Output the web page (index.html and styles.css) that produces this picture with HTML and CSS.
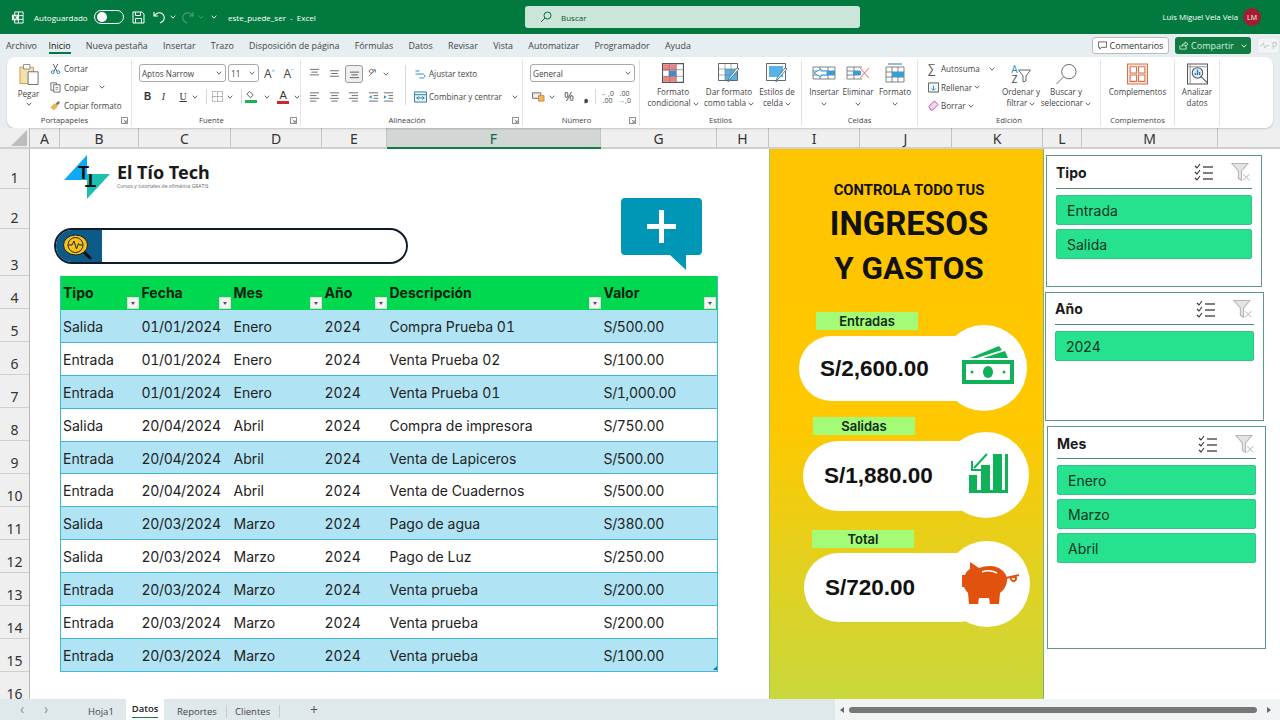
FILE: index.html
```html
<!DOCTYPE html>
<html lang="es">
<head>
    <meta charset="UTF-8">
    <title>este_puede_ser - Excel</title>
    <link rel="stylesheet" href="styles.css">
</head>
<body>

<svg class="defs" width="0" height="0">
    <symbol id="chev" viewBox="0 0 6 4"><path d="M.7.7 3 3.2 5.3.7" fill="none" stroke="currentColor" stroke-width=".9"/></symbol>
    <symbol id="launch" viewBox="0 0 8 8"><path d="M.5.5h7v7h-7zM3 3l3 3M6 3.8V6H3.8" fill="none" stroke="#555" stroke-width=".8"/></symbol>
    <symbol id="checks" viewBox="0 0 20 18">
        <path d="M1 3l2 2 3-4M1 9l2 2 3-4M1 15l2 2 3-4" fill="none" stroke="#333" stroke-width="1.1"/>
        <path d="M9 4h10M9 10h10M9 16h10" stroke="#555" stroke-width="1.3"/>
    </symbol>
    <symbol id="nofilter" viewBox="0 0 18 17">
        <path d="M.5.5h15l-6 7v9l-3-2v-7z" fill="#e4e4e4" stroke="#b5b5b5" stroke-width="1"/>
        <path d="M11 10.500l6 6M17 10.500l-6 6" stroke="#c8c8c8" stroke-width="1"/>
    </symbol>
</svg>

<div class="titlebar">
    <svg class="t-xl" viewBox="0 0 14 14"><path d="M4 1h9v12H4z" fill="none" stroke="#fff"/><path d="M8 1v12M4 5h9M4 9h9" stroke="#fff"/><path d="M1 4h7v6H1z" fill="#fff"/><path d="M3 5l3 4M6 5L3 9" stroke="#027a3f"/></svg>
    <span class="t-auto">Autoguardado</span>
    <span class="toggle"><span class="knob"></span></span>
    <svg class="t-save" viewBox="0 0 13 13"><path d="M1 1h9l2 2v9H1zM3.5 1v3.5h5V1M3.5 12V7.5h6V12" fill="none" stroke="#fff"/></svg>
    <svg class="t-undo" viewBox="0 0 13 13"><path d="M1 1v4h4M1.3 5C3 2 6.5 1 9 2.5c3 2 3 6 .5 8L7 12" fill="none" stroke="#fff" stroke-width="1.1"/></svg>
    <svg class="chev t-c1"><use href="#chev"/></svg>
    <svg class="t-redo" viewBox="0 0 13 13"><path d="M12 1v4H8M11.7 5C10 2 6.5 1 4 2.5c-3 2-3 6-.5 8L6 12" fill="none" stroke="#4e9f78" stroke-width="1.1"/></svg>
    <svg class="chev t-c2 dim"><use href="#chev"/></svg>
    <svg class="chev t-c3"><use href="#chev"/></svg>
    <span class="t-file">este_puede_ser &nbsp;-&nbsp; Excel</span>
    <div class="t-search">
        <svg viewBox="0 0 12 12"><circle cx="7.5" cy="4.5" r="3.5" fill="none" stroke="#0c6b3e"/><path d="M5 7l-4 4" stroke="#0c6b3e"/></svg>
        <span>Buscar</span>
    </div>
    <span class="t-user">Luis Miguel Vela Vela</span>
    <span class="avatar">LM</span>
</div>

<div class="tabrow">
    <nav class="tabs">
        <span>Archivo</span>
        <span class="on">Inicio</span>
        <span>Nueva pestaña</span>
        <span>Insertar</span>
        <span>Trazo</span>
        <span>Disposición de página</span>
        <span>Fórmulas</span>
        <span>Datos</span>
        <span>Revisar</span>
        <span>Vista</span>
        <span>Automatizar</span>
        <span>Programador</span>
        <span>Ayuda</span>
    </nav>
    <button class="btn-comments">
        <svg viewBox="0 0 10 10"><path d="M.5 1h9v6H4L2 9V7H.5z" fill="none" stroke="#333" stroke-width=".8"/></svg>
        Comentarios
    </button>
    <button class="btn-share">
        <svg viewBox="0 0 10 10"><path d="M1 5v4h7V6M3 6c0-2 2-3.500 4-3.500V1l3 2.500L7 6V4.500C5 4.500 4 5 3 6z" fill="none" stroke="#fff" stroke-width=".8"/></svg>
        Compartir
        <svg class="chev"><use href="#chev"/></svg>
    </button>
    <button class="btn-pr">
        <svg viewBox="0 0 10 10"><path d="M0 5h2l1.500-3 2 6L7 5h3" fill="none" stroke="#b9bdbf" stroke-width=".8"/></svg>
        P
    </button>
</div>

<div class="ribbon">
    <!-- Portapapeles -->
    <section class="grp g-clip">
        <div class="grp-body clip-body">
            <div class="big paste">
                <svg class="paste-ico" viewBox="0 0 22 24"><path d="M1 4h15v18H1z" fill="#f6dfae" stroke="#c9973f"/><path d="M5 1h7v5H5z" fill="#fff" stroke="#888"/><path d="M10 9h11v14H10z" fill="#fff" stroke="#666"/></svg>
                <span>Pegar</span>
                <svg class="chev"><use href="#chev"/></svg>
            </div>
            <div class="stack">
                <div class="s-item">
                    <svg viewBox="0 0 12 12"><path d="M3.500 1l4 8M8.500 1l-4 8" stroke="#555"/><circle cx="3" cy="10" r="1.600" fill="none" stroke="#2a7ab8"/><circle cx="9" cy="10" r="1.600" fill="none" stroke="#2a7ab8"/></svg>
                    Cortar
                </div>
                <div class="s-item">
                    <svg viewBox="0 0 12 12"><path d="M1 1h6v8H1z" fill="none" stroke="#666"/><path d="M4 3h7v8H4z" fill="#fff" stroke="#666"/><path d="M6 6h3M6 8h3" stroke="#888"/></svg>
                    Copiar
                    <svg class="chev chev-far"><use href="#chev"/></svg>
                </div>
                <div class="s-item">
                    <svg viewBox="0 0 12 12"><path d="M1 8l4-4 3 3-4 4z" fill="#f1b74d" stroke="#c9873f" stroke-width=".6"/><path d="M6 4l3-3 2 2-3 3z" fill="#777"/></svg>
                    Copiar formato
                </div>
            </div>
        </div>
        <div class="grp-label">Portapapeles<svg class="launch"><use href="#launch"/></svg></div>
    </section>

    <!-- Fuente -->
    <section class="grp g-font">
        <div class="grp-body col">
            <div class="f-row1">
                <div class="combo c-font">Aptos Narrow<svg class="chev"><use href="#chev"/></svg></div>
                <div class="combo c-size">11<svg class="chev"><use href="#chev"/></svg></div>
                <span class="a-up">A<sup>^</sup></span>
                <span class="a-down">A<sup>ˇ</sup></span>
            </div>
            <div class="f-row2">
                <b class="fb">B</b>
                <i class="fi">I</i>
                <u class="fu">U</u>
                <svg class="chev"><use href="#chev"/></svg>
                <span class="vsep"></span>
                <svg class="ico12" viewBox="0 0 12 12"><path d="M.5.500h11v11H.5zM6 .500v11M.5 6h11" fill="none" stroke="#888" stroke-dasharray="1 .6"/></svg>
                <svg class="chev"><use href="#chev"/></svg>
                <span class="vsep"></span>
                <span class="fill-ico"><svg class="ico12" viewBox="0 0 12 10"><path d="M5 1l4 4-3 3-4-4z" fill="none" stroke="#555"/></svg></span>
                <svg class="chev"><use href="#chev"/></svg>
                <span class="color-a">A</span>
                <svg class="chev"><use href="#chev"/></svg>
            </div>
        </div>
        <div class="grp-label">Fuente<svg class="launch"><use href="#launch"/></svg></div>
    </section>

    <!-- Alineación -->
    <section class="grp g-align">
        <div class="grp-body align-body">
            <div class="al-grid">
                <svg class="ico12" viewBox="0 0 12 12"><path d="M1 1.500h10M2.500 4.500h7M1 7.500h10" stroke="#666"/></svg>
                <svg class="ico12" viewBox="0 0 12 12"><path d="M1 3h10M2.500 6h7M1 9h10" stroke="#666"/></svg>
                <span class="al-on"><svg class="ico12" viewBox="0 0 12 12"><path d="M1 4.500h10M2.500 7.500h7M1 10.500h10" stroke="#555"/></svg></span>
                <svg class="ico12" viewBox="0 0 12 12"><path d="M1 9L8 2M8 2H5M8 2v3" fill="none" stroke="#2a8fc0"/><path d="M1 3l3-2 2 3-3 2z" fill="none" stroke="#a55"/></svg>
                <svg class="chev"><use href="#chev"/></svg>
                <svg class="ico12" viewBox="0 0 12 12"><path d="M1 2h10M1 5h7M1 8h10M1 11h7" stroke="#666"/></svg>
                <svg class="ico12" viewBox="0 0 12 12"><path d="M1 2h10M2.500 5h7M1 8h10M2.500 11h7" stroke="#666"/></svg>
                <svg class="ico12" viewBox="0 0 12 12"><path d="M1 2h10M4 5h7M1 8h10M4 11h7" stroke="#666"/></svg>
                <svg class="ico12" viewBox="0 0 12 12"><path d="M1 2h10M6 5h5M6 8h5M1 11h10" stroke="#666"/><path d="M4 4.500L1 6.500l3 2z" fill="#2a8fc0"/></svg>
                <svg class="ico12" viewBox="0 0 12 12"><path d="M1 2h10M6 5h5M6 8h5M1 11h10" stroke="#666"/><path d="M1 4.500L4 6.500l-3 2z" fill="#2a8fc0"/></svg>
            </div>
            <span class="vsep tall"></span>
            <div class="stack wrap-stack">
                <div class="s-item">
                    <svg viewBox="0 0 12 12"><path d="M1 3h4M1 6h7c3 0 3 4 0 4H5" fill="none" stroke="#2a8fc0"/></svg>
                    Ajustar texto
                </div>
                <div class="s-item">
                    <svg viewBox="0 0 14 12"><path d="M.5.500h13v11H.5z" fill="#e3f2fa" stroke="#2a7a9a"/><path d="M.5 3.500h13M3 7h8M3 7l2-1.500M3 7l2 1.500M11 7L9 5.500M11 7L9 8.500" fill="none" stroke="#2a7a9a"/></svg>
                    Combinar y centrar
                    <svg class="chev chev-far"><use href="#chev"/></svg>
                </div>
            </div>
        </div>
        <div class="grp-label">Alineación<svg class="launch"><use href="#launch"/></svg></div>
    </section>

    <!-- Número -->
    <section class="grp g-num">
        <div class="grp-body col">
            <div class="combo c-gen">General<svg class="chev"><use href="#chev"/></svg></div>
            <div class="n-row">
                <svg class="ico14" viewBox="0 0 14 12"><path d="M.5 2h9v6h-9z" fill="#eee" stroke="#666"/><path d="M7 5h6v6H7z" fill="#f3b45a" stroke="#c9873f"/></svg>
                <svg class="chev"><use href="#chev"/></svg>
                <span class="pct">%</span>
                <span class="comma">❟</span>
                <span class="vsep"></span>
                <span class="dec"><i>←</i>,0<br>.00</span>
                <span class="dec">.00<br><i>→</i>,0</span>
            </div>
        </div>
        <div class="grp-label">Número<svg class="launch"><use href="#launch"/></svg></div>
    </section>

    <!-- Estilos -->
    <section class="grp g-styles">
        <div class="grp-body bigs">
            <div class="big b-cond">
                <svg class="ico-l" viewBox="0 0 20 18"><path d="M.5.500h19v17H.5z" fill="#fff" stroke="#555"/><path d="M1 1h7v6H1zM1 12h12v5H1z" fill="#ef7f82"/><path d="M8 1h5v6H8z" fill="#ef7f82"/><path d="M6 7h7v5H6z" fill="#3a8fd0"/><path d="M7 .500v17M13 .500v17M.5 6h19M.5 12h19" stroke="#777" stroke-width=".6"/></svg>
                <span>Formato<br>condicional <svg class="chev"><use href="#chev"/></svg></span>
            </div>
            <div class="big b-tab">
                <svg class="ico-l" viewBox="0 0 22 20"><path d="M.5.500h19v17H.5z" fill="#fff" stroke="#666"/><path d="M7 6h12v11H7z" fill="#58b2e6"/><path d="M7 .500v17M13 .500v17M.5 6h19M.5 12h19" stroke="#777" stroke-width=".6"/><path d="M21 6l-9 10-2 3 1-4 8-10z" fill="#fff" stroke="#3e7c9a" stroke-width=".9"/></svg>
                <span>Dar formato<br>como tabla <svg class="chev"><use href="#chev"/></svg></span>
            </div>
            <div class="big b-cell">
                <svg class="ico-l" viewBox="0 0 22 20"><path d="M.5.500h19v17H.5z" fill="#fff" stroke="#666"/><path d="M3 3h14v11H3z" fill="#58b2e6"/><path d="M21 6l-9 10-2 3 1-4 8-10z" fill="#fff" stroke="#3e7c9a" stroke-width=".9"/></svg>
                <span>Estilos de<br>celda <svg class="chev"><use href="#chev"/></svg></span>
            </div>
        </div>
        <div class="grp-label">Estilos</div>
    </section>

    <!-- Celdas -->
    <section class="grp g-cells">
        <div class="grp-body bigs">
            <div class="big b-ins">
                <svg class="ico-l" viewBox="0 0 24 18"><path d="M1 3h22v12H1zM8 3v12M16 3v12M1 7h22M1 11h22" fill="none" stroke="#666" stroke-width=".8"/><path d="M9 7h14v4H9z" fill="#2f9fe0"/><path d="M9 5L2 9l7 4v-2h6V7H9z" fill="#fff" stroke="#2f9fe0"/></svg>
                <span>Insertar<br><svg class="chev"><use href="#chev"/></svg></span>
            </div>
            <div class="big b-del">
                <svg class="ico-l" viewBox="0 0 24 18"><path d="M1 3h15M1 15h15M1 3v12M8 3v12M1 7h13M1 11h13" fill="none" stroke="#666" stroke-width=".8"/><path d="M7 7h8v4H7z" fill="#2f9fe0"/><path d="M14 4l9 10M23 4l-9 10" stroke="#ef7f82" stroke-width="1.100"/></svg>
                <span>Eliminar<br><svg class="chev"><use href="#chev"/></svg></span>
            </div>
            <div class="big b-fmt">
                <svg class="ico-l" viewBox="0 0 24 20"><path d="M3 4h18v15H3zM9 4v15M15 4v15M3 9h18M3 14h18" fill="none" stroke="#666" stroke-width=".8"/><path d="M9 9h12v5H9z" fill="#2f9fe0"/><path d="M5 1h14" stroke="#2a7ab8"/></svg>
                <span>Formato<br><svg class="chev"><use href="#chev"/></svg></span>
            </div>
        </div>
        <div class="grp-label">Celdas</div>
    </section>

    <!-- Edición -->
    <section class="grp g-edit">
        <div class="grp-body bigs">
            <div class="stack edit-stack">
                <div class="s-item"><span class="sigma">∑</span> Autosuma <svg class="chev chev-far"><use href="#chev"/></svg></div>
                <div class="s-item">
                    <svg viewBox="0 0 12 12"><path d="M.5 1h11v10H.5z" fill="#eef6fb" stroke="#555"/><path d="M6 4v5M4 7l2 2 2-2" fill="none" stroke="#2a8fc0"/></svg>
                    Rellenar <svg class="chev"><use href="#chev"/></svg>
                </div>
                <div class="s-item">
                    <svg viewBox="0 0 12 12"><path d="M1 7l6-6 4 4-6 6H3z" fill="#f5d5ee" stroke="#b04fa0"/></svg>
                    Borrar <svg class="chev"><use href="#chev"/></svg>
                </div>
            </div>
            <div class="big b-sort">
                <span class="sort-ico">
                    <span class="az"><em>A</em>Z</span>
                    <svg viewBox="0 0 13 14"><path d="M.5 1h12L8 7v5l-3 1V7z" fill="none" stroke="#666"/></svg>
                </span>
                <span>Ordenar y<br>filtrar <svg class="chev"><use href="#chev"/></svg></span>
            </div>
            <div class="big b-find">
                <svg class="ico-l" viewBox="0 0 24 24"><circle cx="15" cy="9" r="7.500" fill="none" stroke="#666"/><path d="M9.500 14.500L2 22" stroke="#666"/></svg>
                <span>Buscar y<br>seleccionar <svg class="chev"><use href="#chev"/></svg></span>
            </div>
        </div>
        <div class="grp-label">Edición</div>
    </section>

    <!-- Complementos -->
    <section class="grp g-addin">
        <div class="grp-body bigs">
            <div class="big b-addin">
                <svg class="ico-l" viewBox="0 0 20 20"><path d="M.5.500h19v19H.5z" fill="#fbe4d9" stroke="#d9734e"/><path d="M3 3h6v6H3zM11 3h6v6h-6zM3 11h6v6H3zM11 11h6v6h-6z" fill="#fff" stroke="#d9734e"/></svg>
                <span>Complementos</span>
            </div>
        </div>
        <div class="grp-label">Complementos</div>
    </section>

    <!-- Analizar -->
    <section class="grp g-an">
        <div class="grp-body bigs">
            <div class="big b-an">
                <svg class="ico-l" viewBox="0 0 20 20"><path d="M.5.500h19v19H.5z" fill="#fff" stroke="#555"/><path d="M.5 3h19M3 .500v19" stroke="#999"/><circle cx="10" cy="9" r="5" fill="#dcecf6" stroke="#555"/><path d="M8 11V9M10 11V6M12 11V8" stroke="#2a7ab8" stroke-width="1.300"/><path d="M13 12l6 6" stroke="#555"/></svg>
                <span>Analizar<br>datos</span>
            </div>
        </div>
    </section>
</div>

<div class="colhead">
    <div class="corner"></div>
    <div class="ch c-a">A</div>
    <div class="ch c-b">B</div>
    <div class="ch c-c">C</div>
    <div class="ch c-d">D</div>
    <div class="ch c-e">E</div>
    <div class="ch c-f sel">F</div>
    <div class="ch c-g">G</div>
    <div class="ch c-h">H</div>
    <div class="ch c-i">I</div>
    <div class="ch c-j">J</div>
    <div class="ch c-k">K</div>
    <div class="ch c-l">L</div>
    <div class="ch c-m">M</div>
</div>

<div class="sheet">
    <div class="rowhead">
        <div class="rh r1">1</div>
        <div class="rh r2">2</div>
        <div class="rh r3">3</div>
        <div class="rh">4</div>
        <div class="rh">5</div>
        <div class="rh">6</div>
        <div class="rh">7</div>
        <div class="rh">8</div>
        <div class="rh">9</div>
        <div class="rh">10</div>
        <div class="rh">11</div>
        <div class="rh">12</div>
        <div class="rh">13</div>
        <div class="rh">14</div>
        <div class="rh">15</div>
        <div class="rh">16</div>
    </div>

    <div class="canvas">
        <table class="data">
            <colgroup>
                <col class="w-b"><col class="w-c"><col class="w-d"><col class="w-e"><col class="w-f"><col class="w-g">
            </colgroup>
            <thead>
                <tr>
                    <th>Tipo<span class="fbtn"></span></th>
                    <th>Fecha<span class="fbtn"></span></th>
                    <th>Mes<span class="fbtn"></span></th>
                    <th>Año<span class="fbtn"></span></th>
                    <th>Descripción<span class="fbtn"></span></th>
                    <th>Valor<span class="fbtn"></span></th>
                </tr>
            </thead>
            <tbody>
                <tr><td>Salida</td><td>01/01/2024</td><td>Enero</td><td>2024</td><td>Compra Prueba 01</td><td>S/500.00</td></tr>
                <tr><td>Entrada</td><td>01/01/2024</td><td>Enero</td><td>2024</td><td>Venta Prueba 02</td><td>S/100.00</td></tr>
                <tr><td>Entrada</td><td>01/01/2024</td><td>Enero</td><td>2024</td><td>Venta Prueba 01</td><td>S/1,000.00</td></tr>
                <tr><td>Salida</td><td>20/04/2024</td><td>Abril</td><td>2024</td><td>Compra de impresora</td><td>S/750.00</td></tr>
                <tr><td>Entrada</td><td>20/04/2024</td><td>Abril</td><td>2024</td><td>Venta de Lapiceros</td><td>S/500.00</td></tr>
                <tr><td>Entrada</td><td>20/04/2024</td><td>Abril</td><td>2024</td><td>Venta de Cuadernos</td><td>S/500.00</td></tr>
                <tr><td>Salida</td><td>20/03/2024</td><td>Marzo</td><td>2024</td><td>Pago de agua</td><td>S/380.00</td></tr>
                <tr><td>Salida</td><td>20/03/2024</td><td>Marzo</td><td>2024</td><td>Pago de Luz</td><td>S/250.00</td></tr>
                <tr><td>Entrada</td><td>20/03/2024</td><td>Marzo</td><td>2024</td><td>Venta prueba</td><td>S/200.00</td></tr>
                <tr><td>Entrada</td><td>20/03/2024</td><td>Marzo</td><td>2024</td><td>Venta prueba</td><td>S/200.00</td></tr>
                <tr><td>Entrada</td><td>20/03/2024</td><td>Marzo</td><td>2024</td><td>Venta prueba</td><td>S/100.00</td></tr>
            </tbody>
        </table>
        <span class="resize-mark"></span>

        <!-- floating shapes on the sheet -->
        <div class="logo">
            <svg viewBox="0 0 46 44">
                <path d="M23 0L0 25h23z" fill="#10a9f5"/>
                <path d="M23 44l23-25H23z" fill="#1cc0ae"/>
                <text x="14" y="24" class="logo-t">T</text>
                <text x="-32" y="-19" class="logo-t" transform="rotate(180)">T</text>
            </svg>
            <div class="logo-text">
                <div class="logo-name">El Tío Tech</div>
                <div class="logo-sub">Cursos y tutoriales de ofimática GRATIS</div>
            </div>
        </div>

        <div class="search">
            <div class="search-ico">
                <svg viewBox="0 0 30 30">
                    <path d="M20 18l7 7" stroke="#111" stroke-width="3" stroke-linecap="round"/>
                    <ellipse cx="12.500" cy="12" rx="12" ry="10" fill="#f5c21b" stroke="#222" stroke-width="1"/>
                    <circle cx="12.500" cy="12" r="7.500" fill="none" stroke="#222"/>
                    <path d="M6 12h3l2-4 2.500 8 2-5.500 1 1.500h3" fill="none" stroke="#222"/>
                </svg>
            </div>
        </div>

        <svg class="add" viewBox="0 0 81 72">
            <path d="M4 0h73a4 4 0 0 1 4 4v49a4 4 0 0 1-4 4H65v15L49 57H4a4 4 0 0 1-4-4V4a4 4 0 0 1 4-4z" fill="#0096b5"/>
            <path d="M26 26h12V12h5v14h12v5H43v14h-5V31H26z" fill="#fff"/>
        </svg>

        <aside class="panel">
            <div class="p-sub">CONTROLA TODO TUS</div>
            <div class="p-title t1">INGRESOS</div>
            <div class="p-title t2">Y GASTOS</div>
        </aside>

        <div class="kpi k1">
            <div class="k-label">Entradas</div>
            <div class="k-pill"><span class="k-val">S/2,600.00</span></div>
            <div class="k-round">
                <svg class="k-ico" viewBox="0 0 54 40">
                    <path d="M9 13L38 1l3 4L16 13zM22 13L44 6l3 7z" fill="#10b158"/>
                    <path d="M1 15h52v24H1z" fill="#10b158"/>
                    <path d="M5 19h44v16H5z" fill="#fff"/>
                    <ellipse cx="27" cy="27" rx="5" ry="6" fill="#10b158"/>
                    <circle cx="11" cy="27" r="1.500" fill="#10b158"/>
                    <circle cx="43" cy="27" r="1.500" fill="#10b158"/>
                </svg>
            </div>
        </div>

        <div class="kpi k2">
            <div class="k-label">Salidas</div>
            <div class="k-pill"><span class="k-val">S/1,880.00</span></div>
            <div class="k-round">
                <svg class="k-ico" viewBox="0 0 40 40">
                    <path d="M0 22h8v15H0zM12 12h9v25h-9zM24 1h9v36h-9zM36 1h3v39H0v-3h36z" fill="#10b158"/>
                    <path d="M18 1L5 15M3 8v9h9" fill="none" stroke="#10b158" stroke-width="2"/>
                </svg>
            </div>
        </div>

        <div class="kpi k3">
            <div class="k-label">Total</div>
            <div class="k-pill"><span class="k-val">S/720.00</span></div>
            <div class="k-round">
                <svg class="k-ico" viewBox="0 0 58 44">
                    <path d="M8 1l9 6c8-3 18-3 24 3 3 3 4 6 4 9 0 5-3 10-7 13l-1 11h-9l-1-6H17l-1 6H7l-1-11c-2-2-3-4-4-6H0V14h3c1-3 3-5 5-6z" fill="#e2520f"/>
                    <path d="M20 11c5-2 11-1 15 1" fill="none" stroke="#fff" stroke-width="1.500"/>
                    <path d="M44 17l13-3M49 16c-1 4 4 6 5 2 .5-2-2-3-3-1" fill="none" stroke="#e2520f" stroke-width="2"/>
                </svg>
            </div>
        </div>

        <div class="slicer s-tipo">
            <div class="sl-head">
                <span>Tipo</span>
                <svg class="sl-ico"><use href="#checks"/></svg>
                <svg class="sl-ico"><use href="#nofilter"/></svg>
            </div>
            <div class="sl-item">Entrada</div>
            <div class="sl-item">Salida</div>
        </div>

        <div class="slicer s-anio">
            <div class="sl-head">
                <span>Año</span>
                <svg class="sl-ico"><use href="#checks"/></svg>
                <svg class="sl-ico"><use href="#nofilter"/></svg>
            </div>
            <div class="sl-item">2024</div>
        </div>

        <div class="slicer s-mes">
            <div class="sl-head">
                <span>Mes</span>
                <svg class="sl-ico"><use href="#checks"/></svg>
                <svg class="sl-ico"><use href="#nofilter"/></svg>
            </div>
            <div class="sl-item">Enero</div>
            <div class="sl-item">Marzo</div>
            <div class="sl-item">Abril</div>
        </div>
    </div>
</div>

<div class="sheetbar">
    <span class="arrow a-l">‹</span>
    <span class="arrow a-r">›</span>
    <span class="sh sh-1">Hoja1</span>
    <span class="sh sh-on">Datos</span>
    <span class="sh sh-3">Reportes</span>
    <span class="sh sh-4">Clientes</span>
    <span class="sh-plus">+</span>
    <div class="hscroll">
        <span class="sc-l"></span>
        <span class="sc-thumb"></span>
        <span class="sc-r"></span>
    </div>
</div>

</body>
</html>
```

FILE: styles.css
```css
* {
    box-sizing: border-box;
}

html, body {
    margin: 0;
    height: 720px;
    overflow: hidden;
}

body {
    font-family: 'Open Sans', 'Noto Sans', sans-serif;
    background: #fff;
    background-image: linear-gradient(#e6eef2, #e6eef2);
    background-size: 100% 130px;
    background-repeat: no-repeat;
    color: #333;
    display: flex;
    flex-direction: column;
    width: 1280px;
}

.defs {
    position: absolute;
}

.chev {
    width: 6px;
    height: 4px;
    display: inline-block;
    color: #555;
    vertical-align: middle;
    flex: none;
}

/* title bar */
.titlebar {
    height: 34px;
    background: #027a3f;
    color: #fff;
    display: flex;
    align-items: center;
    padding-left: 11px;
    font-size: 8px;
    flex: none;
}

.t-xl { width: 13px; height: 13px; margin-right: 10px; }
.t-auto { width: 60px; white-space: nowrap; }
.toggle {
    width: 30px;
    height: 14px;
    border: 1px solid #fff;
    border-radius: 7px;
    display: flex;
    align-items: center;
    padding-left: 2px;
}
.knob { width: 10px; height: 10px; background: #fff; border-radius: 50%; }
.t-save { width: 13px; height: 13px; margin-left: 8px; }
.t-undo { width: 13px; height: 13px; margin-left: 8px; }
.t-c1 { margin-left: 4px; color: #fff; }
.t-redo { width: 13px; height: 13px; margin-left: 5px; }
.t-c2 { margin-left: 4px; }
.chev.dim { color: #4e9f78; }
.t-c3 { margin-left: 7px; color: #fff; }
.t-file { margin-left: 11px; width: 297px; white-space: nowrap; }

.t-search {
    width: 335px;
    height: 22px;
    background: #c9e6d9;
    border-radius: 3px;
    color: #14532f;
    display: flex;
    align-items: center;
    padding-left: 15px;
    gap: 9px;
}
.t-search svg { width: 12px; height: 12px; }

.t-user { margin-left: auto; font-size: 7.800px; }
.avatar {
    width: 18px;
    height: 18px;
    border-radius: 50%;
    background: #a51c30;
    font-size: 7px;
    display: flex;
    align-items: center;
    justify-content: center;
    margin: 0 19px 0 5px;
}

/* tabs */
.tabrow {
    height: 23px;
    background: #e6eef2;
    display: flex;
    align-items: center;
    font-size: 8.900px;
    color: #444;
    flex: none;
}

.tabs {
    display: flex;
    gap: 15.300px;
    padding-left: 6px;
    margin-right: auto;
}
.tabs span { white-space: nowrap; }
.tabs .on {
    color: #111;
    margin-left: -3.700px;
    box-shadow: 0 2px 0 #027a3f;
}

.tabrow button {
    font-family: inherit;
    font-size: 9px;
    height: 17px;
    border-radius: 3px;
    display: flex;
    align-items: center;
    gap: 3px;
    padding: 0;
    justify-content: center;
}
.tabrow svg { width: 9px; height: 9px; }
.btn-comments {
    width: 77px;
    background: #fff;
    border: 1px solid #bbb;
    color: #333;
    margin-right: 6px;
}
.btn-share {
    width: 76px;
    background: #107c41;
    border: none;
    color: #d7f0e2;
    margin-right: 6px;
}
.tabrow .btn-share .chev { width: 6px; height: 4px; color: #fff; margin-left: 4px; }
.btn-pr {
    width: 23px;
    background: #f1f4f5;
    border: 1px solid #e2e6e8;
    color: #b9bdbf;
}

/* ribbon */
.ribbon {
    height: 71px;
    margin: 0 7px;
    background: #fff;
    border-radius: 8px;
    display: flex;
    box-shadow: 0 1px 2px rgba(0, 0, 0, 0.18);
    position: relative;
    font-size: 8.100px;
    flex: none;
}

.grp {
    display: flex;
    flex-direction: column;
    border-right: 1px solid #e3e3e3;
    margin: 3px 0 2px;
    position: relative;
    flex: none;
}
.grp-body { flex: 1; display: flex; }
.grp-label {
    height: 12px;
    text-align: center;
    line-height: 12px;
    color: #444;
    font-size: 7.700px;
}
.g-clip .grp-label, .g-font .grp-label, .g-align .grp-label, .g-num .grp-label {
    padding-right: 9px;
}
.launch {
    position: absolute;
    right: 3px;
    bottom: 2px;
    width: 7px;
    height: 7px;
}

.g-clip { width: 125px; }
.g-font { width: 169px; }
.g-align { width: 222px; }
.g-num { width: 117px; }
.g-styles { width: 162px; }
.g-cells { width: 116px; }
.g-edit { width: 183px; }
.g-addin { width: 74px; }
.g-an { width: 45px; }

.big {
    display: flex;
    flex-direction: column;
    align-items: center;
    text-align: center;
    line-height: 11px;
    color: #444;
    white-space: nowrap;
    flex: none;
}
.ico-l { width: 22px; height: 20px; margin-bottom: 3px; }

.stack {
    display: flex;
    flex-direction: column;
    justify-content: space-between;
    padding: 4px 0;
    color: #444;
    white-space: nowrap;
}
.s-item { display: flex; align-items: center; gap: 2px; height: 13px; }
.s-item svg { width: 11px; height: 11px; flex: none; }
.s-item .chev { width: 6px; height: 4px; }
.chev-far { margin-left: 7px; }
.vsep {
    width: 1px;
    height: 15px;
    background: #d8d8d8;
    flex: none;
}
.vsep.tall { height: 40px; margin: 3px 8px 0 0; }
.ico12 { width: 11px; height: 11px; flex: none; }
.ico14 { width: 13px; height: 11px; flex: none; }

/* clipboard */
.paste { width: 43px; padding-top: 3px; }
.paste-ico { width: 20px; height: 23px; margin-bottom: 2px; }
.paste .chev { margin-top: 3px; }
.g-clip .stack { padding: 2px 0 0; height: 52px; }
.g-clip .s-item { gap: 3px; }

/* font */
.col { flex-direction: column; }
.combo {
    height: 18px;
    border: 1px solid #a9a9a9;
    border-radius: 3px;
    display: flex;
    align-items: center;
    justify-content: space-between;
    padding: 0 3px 0 2px;
    color: #444;
    white-space: nowrap;
}
.f-row1 {
    display: flex;
    align-items: center;
    padding: 4px 0 0 7px;
    gap: 2px;
}
.c-font { width: 87px; }
.c-size { width: 31px; }
.a-up, .a-down { font-size: 12px; width: 17px; text-align: center; color: #444; }
.a-up sup, .a-down sup { font-size: 6px; color: #2a7ab8; line-height: 0; }
.f-row2 {
    display: flex;
    align-items: center;
    padding: 7px 0 0 12px;
    font-family: 'Liberation Serif', serif;
    font-size: 10px;
    color: #333;
}
.fb { width: 18px; font-family: 'Liberation Sans', sans-serif; }
.fi { width: 18px; }
.fu { width: 13px; }
.f-row2 .vsep { margin: 0 5px 0 8px; }
.f-row2 .ico12 + .chev { margin-left: 4px; }
.fill-ico {
    width: 12px;
    height: 13px;
    border-bottom: 3px solid #1fb14e;
    margin: 0 7px 0 -2px;
    display: flex;
}
.fill-ico .ico12 { height: 10px; }
.color-a {
    font-family: 'Liberation Sans', sans-serif;
    font-size: 11px;
    height: 14px;
    width: 12px;
    line-height: 11px;
    text-align: center;
    border-bottom: 3px solid #d2232a;
    margin: 0 5px 0 7px;
}

/* alignment */
.align-body { padding: 2px 0 0 8px; }
.al-grid {
    display: grid;
    grid-template-columns: 20px 19px 20px 15px 14px;
    grid-auto-rows: 23px;
    align-items: center;
    width: 96px;
}
.al-on {
    width: 18px;
    height: 18px;
    background: #efefef;
    border: 1px solid #9a9a9a;
    border-radius: 3px;
    display: flex;
    align-items: center;
    justify-content: center;
    margin-left: -3px;
}
.wrap-stack { padding: 5px 0 0; height: 42px; gap: 10px; justify-content: flex-start; }
.wrap-stack .s-item svg:first-child { width: 13px; height: 12px; }
.wrap-stack .chev-far { margin-left: 8px; }

/* number */
.g-num .combo { width: 105px; margin: 4px 0 0 7px; }
.n-row {
    display: flex;
    align-items: center;
    padding: 6px 0 0 9px;
    color: #444;
}
.n-row .chev { margin-left: 4px; }
.pct { font-size: 12px; margin-left: 6px; width: 16px; text-align: center; }
.comma { font-size: 11px; font-weight: 700; margin-left: 3px; width: 12px; text-align: center; }
.n-row .vsep { margin: 0 3px; }
.dec {
    font-size: 7px;
    line-height: 7px;
    width: 17px;
    text-align: center;
}
.dec i { color: #2a8fc0; font-style: normal; }

/* big button groups */
.bigs { padding-top: 3px; }
.b-cond { width: 66px; }
.b-tab { width: 46px; }
.b-cell { width: 50px; }
.g-cells .bigs { padding-left: 5px; }
.b-ins, .b-del { width: 34px; }
.b-fmt { width: 40px; }
.g-cells .ico-l { width: 24px; }
.g-edit .bigs { padding-left: 10px; }
.edit-stack { width: 72px; height: 50px; padding: 0; margin-top: -1px; }
.sigma { width: 11px; font-size: 12px; line-height: 12px; color: #555; }
.b-sort { width: 42px; }
.b-find { width: 48px; }
.sort-ico { display: flex; height: 23px; }
.sort-ico svg { width: 13px; height: 14px; margin-top: 6px; }
.az {
    display: flex;
    flex-direction: column;
    font-size: 10px;
    line-height: 10px;
    margin-top: 1px;
}
.az em { color: #2a8fc0; font-style: normal; }
.b-find .ico-l { height: 23px; width: 24px; margin-bottom: 0; }
.b-addin, .b-an { width: 100%; }
.b-addin .ico-l, .b-an .ico-l { width: 21px; height: 22px; margin-bottom: 1px; }

/* column headers */
.colhead {
    height: 21px;
    display: flex;
    background: #efefef;
    border-bottom: 2px solid #cfcfcf;
    font-family: 'Noto Sans', sans-serif;
    font-size: 14px;
    color: #333;
    flex: none;
}
.corner {
    width: 30px;
    background: #efefef;
    border-right: 1px solid #b9b9b9;
    position: relative;
    flex: none;
}
.corner::after {
    content: "";
    position: absolute;
    right: 2px;
    bottom: 1px;
    width: 0;
    height: 0;
    border-style: solid;
    border-width: 0 0 16px 16px;
    border-color: transparent transparent #bdbdbd transparent;
}
.ch {
    border-right: 1px solid #c4c4c4;
    text-align: center;
    line-height: 21px;
    flex: none;
}
.ch.sel {
    background: #d2d6d4;
    box-shadow: 0 2px 0 #107c41;
    color: #0c6b3e;
}
.c-a { width: 30px; }
.c-b { width: 79px; }
.c-c { width: 92px; }
.c-d { width: 91px; }
.c-e { width: 65px; }
.c-f { width: 214px; }
.c-g { width: 116px; }
.c-h { width: 52px; }
.c-i { width: 91px; }
.c-j { width: 92px; }
.c-k { width: 91px; }
.c-l { width: 39px; }
.c-m { width: 136px; }

/* sheet */
.sheet {
    height: 550px;
    display: flex;
    overflow: hidden;
    flex: none;
}
.rowhead {
    width: 30px;
    background: #efefef;
    border-right: 1px solid #b9b9b9;
    font-family: 'Noto Sans', sans-serif;
    font-size: 14px;
    color: #333;
    flex: none;
}
.rh {
    height: 33px;
    border-bottom: 1px solid #cfcfcf;
    line-height: 20px;
    display: flex;
    align-items: flex-end;
    justify-content: center;
}
.r1, .r2 { height: 40px; }
.r3 { height: 47px; }

.canvas {
    flex: 1;
    position: relative;
    padding: 127px 0 0 30px;
    background: #fff;
}

/* table */
.data {
    border-collapse: collapse;
    table-layout: fixed;
    width: 657px;
    font-family: 'Inter', sans-serif;
    font-size: 14px;
    font-variant-numeric: tabular-nums;
    color: #222;
    border-left: 1px solid #3fb7d5;
    border-right: 1px solid #3fb7d5;
    border-bottom: 1px solid #3fb7d5;
}
.w-b { width: 79px; }
.w-c { width: 92px; }
.w-d { width: 91px; }
.w-e { width: 65px; }
.w-f { width: 214px; }
.w-g { width: 116px; }
.data th {
    height: 33.500px;
    background: #00d84f;
    color: #0d1f10;
    text-align: left;
    padding: 0 0 0 2px;
    font-weight: 700;
    position: relative;
}
.data td {
    height: 32.900px;
    padding: 1px 0 0 2px;
    border-bottom: 1px solid #3fb7d5;
    white-space: nowrap;
}
.data td:nth-child(2), .data td:nth-child(6) { letter-spacing: -.35px; }
.data tbody tr:nth-child(odd) { background: #b0e4f5; }
.fbtn {
    position: absolute;
    right: 1px;
    bottom: 1px;
    width: 12px;
    height: 12px;
    background: #f4f4f4;
    border: 1px solid #ddd;
}
.fbtn::after {
    content: "";
    position: absolute;
    left: 3px;
    top: 4px;
    border: 2.500px solid transparent;
    border-top: 3px solid #555;
}
.resize-mark {
    position: absolute;
    left: 683px;
    top: 517px;
    border-style: solid;
    border-width: 0 0 4px 4px;
    border-color: transparent transparent #1a6fb5 transparent;
}

/* logo */
.logo {
    position: absolute;
    left: 34px;
    top: 6px;
    display: flex;
    gap: 7px;
}
.logo svg { width: 46px; height: 44px; }
.logo-t {
    font-family: 'Liberation Sans', sans-serif;
    font-weight: 700;
    font-size: 18px;
    fill: #111;
}
.logo-text { padding-top: 6px; }
.logo-name {
    font-family: 'Noto Sans', sans-serif;
    font-weight: 700;
    font-size: 18px;
    line-height: 22px;
    color: #1a1a1a;
    white-space: nowrap;
}
.logo-sub {
    font-size: 5px;
    line-height: 6px;
    color: #666;
    white-space: nowrap;
}

/* search */
.search {
    position: absolute;
    left: 24px;
    top: 79px;
    width: 354px;
    height: 36px;
    background: #fff;
    border: 2px solid #0d1b2a;
    border-radius: 18px;
    overflow: hidden;
}
.search-ico {
    width: 46px;
    height: 100%;
    background: #0b5a87;
    padding: 3px 0 0 7px;
}
.search-ico svg { width: 30px; height: 30px; display: block; }

.add {
    position: absolute;
    left: 591px;
    top: 49px;
    width: 81px;
    height: 72px;
}

/* yellow panel */
.panel {
    position: absolute;
    left: 739px;
    top: 0;
    width: 275px;
    height: 550px;
    background: linear-gradient(#ffc400 0%, #ffc800 50%, #c9d83c 100%);
    border-left: 1px solid #9ccb6e;
    border-right: 1px solid #7fb56a;
    text-align: center;
    font-family: 'Roboto', sans-serif;
    font-weight: 700;
    color: #111;
    padding-left: 5px;
}
.p-sub { font-size: 14.800px; margin-top: 33px; line-height: 16px; }
.p-title { font-size: 33px; line-height: 44px; }
.t1 { margin-top: 4px; }
.t2 { margin-top: 1px; font-size: 31.500px; }

.kpi {
    position: absolute;
    width: 231px;
    height: 86px;
}
.k1 { left: 769px; top: 176px; }
.k2 { left: 773px; top: 283px; width: 229px; }
.k3 { left: 774px; top: 392px; width: 229px; }
.k-label {
    position: absolute;
    top: 0;
    height: 18px;
    width: 102px;
    background: #a4fb76;
    font-family: 'Inter', sans-serif;
    font-weight: 600;
    font-size: 13px;
    line-height: 18px;
    text-align: center;
    color: #0e2a12;
}
.k1 .k-label { left: 17px; top: -13px; }
.k2 .k-label { left: 10px; top: -15px; }
.k3 .k-label { left: 8px; top: -11px; }
.k-pill {
    position: absolute;
    background: #fff;
    height: 65px;
    width: 190px;
    border-radius: 33px;
    display: flex;
    align-items: center;
}
.k1 .k-pill { left: 0; top: 11px; }
.k2 .k-pill { left: 0; top: 9px; height: 70px; border-radius: 35px; }
.k3 .k-pill { left: 0; top: 12px; height: 69px; border-radius: 35px; }
.k-val {
    font-family: 'Liberation Sans', sans-serif;
    font-weight: 700;
    font-size: 22.500px;
    color: #111;
    padding-left: 21px;
}
.k-round {
    position: absolute;
    right: 3px;
    top: 0;
    width: 86px;
    height: 86px;
    background: #fff;
    border-radius: 50%;
    display: flex;
    align-items: center;
    justify-content: center;
}
.k1 .k-ico { width: 54px; height: 40px; margin: -6px 0 0 7px; }
.k2 .k-ico { width: 40px; height: 40px; margin: -4px 0 0 6px; }
.k3 .k-ico { width: 58px; height: 44px; margin: -2px 0 0 7px; }

/* slicers */
.slicer {
    position: absolute;
    background: #fff;
    border: 1px solid #5d9a84;
    padding: 0 9px;
    font-family: 'Inter', sans-serif;
    color: #1a1a1a;
}
.s-tipo { left: 1016px; top: 6px; width: 216px; height: 132px; }
.s-anio { left: 1015px; top: 143px; width: 219px; height: 129px; }
.s-mes { left: 1017px; top: 277px; width: 219px; height: 223px; }
.sl-head {
    height: 33px;
    border-bottom: 1px solid #4d8a74;
    display: flex;
    align-items: center;
    font-weight: 700;
    font-size: 14px;
    margin-bottom: 6px;
    padding-right: 1px;
}
.s-anio .sl-head, .s-mes .sl-head { height: 32px; }
.s-mes .sl-head { padding-top: 2px; }
.sl-head span { margin-right: auto; }
.sl-ico { width: 20px; height: 18px; margin-left: 17px; }
.sl-item {
    height: 30px;
    background: #26e28f;
    border: 1px solid #35c488;
    border-radius: 2px;
    margin-bottom: 4px;
    padding-left: 10px;
    line-height: 29px;
    font-size: 14px;
    color: #113322;
}

/* bottom bar */
.sheetbar {
    height: 21px;
    background: #dfe9eb;
    position: relative;
    font-size: 9.500px;
    color: #444;
    display: flex;
    align-items: center;
    flex: none;
}
.arrow { position: absolute; top: 0; font-size: 14px; color: #8a9496; }
.a-l { left: 20px; }
.a-r { left: 44px; }
.sh { position: absolute; top: 6px; white-space: nowrap; }
.sh-1 { left: 88px; }
.sh-on {
    left: 126px;
    top: 0;
    width: 38px;
    height: 21px;
    background: #fff;
    text-align: center;
    font-weight: 600;
    line-height: 19px;
    color: #222;
}
.sh-on::after {
    content: "";
    position: absolute;
    left: 6px;
    right: 6px;
    bottom: 2px;
    height: 1.500px;
    background: #107c41;
}
.sh-3 { left: 177px; padding-right: 9px; border-right: 1px solid #c4cdcf; }
.sh-4 { left: 235px; padding-right: 9px; border-right: 1px solid #c4cdcf; }
.sh-plus { position: absolute; left: 310px; top: 1px; font-size: 14px; color: #555; }
.hscroll {
    position: absolute;
    left: 835px;
    right: 0;
    top: 0;
    height: 21px;
    background: #f1f4f4;
    display: flex;
    align-items: center;
    padding-left: 5px;
}
.sc-l, .sc-r {
    border: 3px solid transparent;
    width: 0;
    height: 0;
}
.sc-l { border-right: 4px solid #666; border-left: 0; }
.sc-r { border-left: 4px solid #666; border-right: 0; margin-left: 10px; }
.sc-thumb {
    width: 408px;
    height: 6px;
    background: #777;
    border-radius: 3px;
    margin-left: 5px;
}
```
